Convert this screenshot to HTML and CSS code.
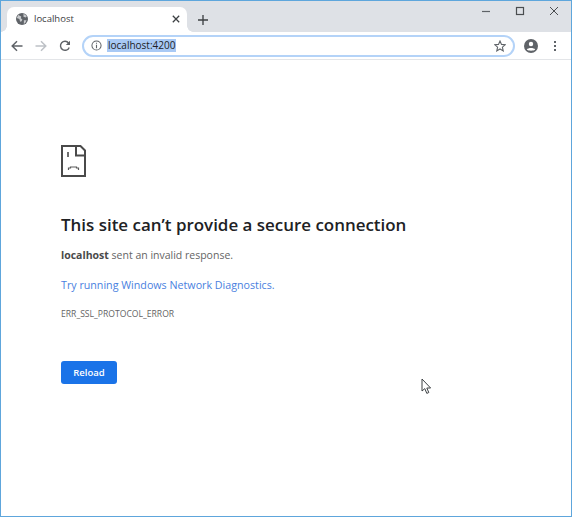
FILE: index.html
```html
<!DOCTYPE html>
<html lang="en">

  <head>
    <meta charset="UTF-8">
    <meta name="viewport" content="width=device-width, initial-scale=1.0">
    <title>localhost</title>
    <link rel="stylesheet" href="styles.css">
  </head>

  <body>
    <div class="window">
      <div class="tabstrip">
        <div class="tab">
          <svg class="globe" viewBox="0 0 16 16" width="12" height="12">
            <circle cx="8" cy="8" r="8" fill="#5f6368"/>
            <path d="M3 2.5 7 4.5 6.5 7 8.5 8.5 7.5 11 5.5 11.5 4.5 8 1 6.5ZM10 1 14.5 4 13 6 10 5ZM10.5 9.5 14 9.5 12.5 13 10.5 14.5Z" fill="#c8cacd"/>
          </svg>
          <span class="tab-title">localhost</span>
          <svg class="tab-close" viewBox="0 0 10 10" width="8" height="8">
            <path d="M1 1 9 9M9 1 1 9" stroke="#3c4043" stroke-width="1.6"/>
          </svg>
        </div>
        <svg class="new-tab" viewBox="0 0 12 12" width="10" height="10">
          <path d="M6 0V12M0 6H12" stroke="#3c4043" stroke-width="1.6"/>
        </svg>
        <div class="caption">
          <svg viewBox="0 0 10 10" width="10" height="10"><path d="M1 5.5H9" stroke="#5f6368" stroke-width="1.2"/></svg>
          <svg viewBox="0 0 10 10" width="10" height="10"><rect x="1.5" y="1.5" width="7" height="7" fill="none" stroke="#4a4d50" stroke-width="1.2"/></svg>
          <svg viewBox="0 0 10 10" width="10" height="10"><path d="M1 1 9 9M9 1 1 9" stroke="#4a4d50" stroke-width="1"/></svg>
        </div>
      </div>

      <div class="toolbar">
        <svg class="nav" viewBox="0 0 12 12" width="12" height="12">
          <path d="M11.5 6H1.5M6 1.2 1.2 6 6 10.8" fill="none" stroke="#5f6368" stroke-width="1.5"/>
        </svg>
        <svg class="nav" viewBox="0 0 12 12" width="12" height="12">
          <path d="M.5 6H10.5M6 1.2 10.8 6 6 10.8" fill="none" stroke="#bdc1c6" stroke-width="1.5"/>
        </svg>
        <svg class="nav" viewBox="0 0 12 12" width="12" height="12">
          <path d="M10.2 7.4A4.5 4.5 0 1 1 9.6 3.1" fill="none" stroke="#5f6368" stroke-width="1.4"/>
          <path d="M11 .8V5H6.8Z" fill="#5f6368"/>
        </svg>
        <div class="omnibox">
          <svg viewBox="0 0 12 12" width="11" height="11">
            <circle cx="6" cy="6" r="5" fill="none" stroke="#5f6368" stroke-width="1.1"/>
            <path d="M6 5.2V9M6 3V4.2" stroke="#5f6368" stroke-width="1.2"/>
          </svg>
          <span class="url">localhost:4200</span>
          <svg class="star" viewBox="0 0 12 12" width="12" height="12">
            <path d="M6 1 7.5 4.4 11.2 4.8 8.4 7.2 9.2 10.9 6 9 2.8 10.9 3.6 7.2.8 4.8 4.5 4.4Z" fill="none" stroke="#5f6368" stroke-width="1.1"/>
          </svg>
        </div>
        <svg class="avatar" viewBox="0 0 14 14" width="14" height="14">
          <circle cx="7" cy="7" r="7" fill="#5f6368"/>
          <circle cx="7" cy="5" r="2.2" fill="#fff"/>
          <path d="M2.8 10.6C4 8.6 10 8.6 11.2 10.6 10 12.2 4 12.2 2.8 10.6Z" fill="#fff"/>
        </svg>
        <div class="menu"><i></i><i></i><i></i></div>
      </div>

      <main class="page">
        <svg class="sad-page" viewBox="0 0 25 32" width="25" height="32">
          <path d="M1 1H19.5L24 5.5V31H1Z" fill="none" stroke="#4a4a4a" stroke-width="2"/>
          <path d="M15 1V10.5H24" fill="none" stroke="#4a4a4a" stroke-width="2"/>
          <path d="M7 7V12" stroke="#6e6e6e" stroke-width="2"/>
          <path d="M7.5 25V23H9.5V22H15.5V23H17.5V25" fill="none" stroke="#5a5a5a" stroke-width="1.2"/>
        </svg>
        <h1>This site can’t provide a secure connection</h1>
        <p class="summary"><strong>localhost</strong> sent an invalid response.</p>
        <a class="diag" href="#">Try running Windows Network Diagnostics.</a>
        <p class="code">ERR_SSL_PROTOCOL_ERROR</p>
        <button class="reload">Reload</button>
        <svg class="cursor" viewBox="0 0 11 17" width="11" height="17">
          <path d="M1 1V13L3.8 10.6 5.8 15.4 7.8 14.5 5.8 10H9.6Z" fill="#fff" stroke="#3c4043" stroke-width="1"/>
        </svg>
      </main>
    </div>
  </body>

</html>
```

FILE: styles.css
```css
* {
  box-sizing: border-box;
}

body {
  margin: 0;
  background-color: #fff;
  font-family: "Open Sans", "Liberation Sans", sans-serif;
}

.window {
  display: flex;
  flex-direction: column;
  width: 572px;
  height: 517px;
  border: 1px solid #5ea6dc;
}

.tabstrip {
  display: flex;
  align-items: flex-end;
  height: 31px;
  padding-left: 6px;
  background-color: #dee1e6;
}

.tab {
  position: relative;
  display: flex;
  align-items: center;
  width: 180px;
  height: 25px;
  padding: 0 2px 2px 9px;
  background-color: #fff;
  border-radius: 7px 7px 0 0;
}

/* little flares where the tab meets the toolbar */
.tab::before,
.tab::after {
  content: "";
  position: absolute;
  bottom: 0;
  width: 6px;
  height: 6px;
}

.tab::before {
  left: -6px;
  background: radial-gradient(circle at 0 0, #dee1e6 5.5px, #fff 6px);
}

.tab::after {
  right: -6px;
  background: radial-gradient(circle at 100% 0, #dee1e6 5.5px, #fff 6px);
}

.tab-title {
  flex: 1;
  margin-left: 6px;
  font-size: 9.5px;
  color: #3c4043;
}

.tab-close {
  margin-right: 5px;
}

.new-tab {
  margin: 0 0 7px 11px;
}

.caption {
  display: flex;
  align-self: flex-start;
  gap: 24px;
  margin: 5px 0 0 auto;
  padding-right: 12px;
}

.toolbar {
  display: flex;
  align-items: center;
  height: 28px;
  padding: 0 12px 0 10px;
  background-color: #fff;
  border-bottom: 1px solid #e3e5e8;
}

.nav {
  margin-right: 12px;
}

.omnibox {
  display: flex;
  align-items: center;
  width: 433px;
  height: 22px;
  margin: 0 9px 0 -1px;
  padding: 0 7px;
  border: 2px solid #b4d3f8;
  border-radius: 11px;
}

.url {
  margin-left: 5px;
  padding: 0 1px;
  font-size: 10px;
  line-height: 13px;
  color: #202124;
  background-color: #a8c9f5;
}

.star {
  margin-left: auto;
}

.menu {
  display: flex;
  flex-direction: column;
  gap: 2px;
  margin-left: 16px;
}

.menu i {
  width: 2px;
  height: 2px;
  background-color: #5f6368;
}

.page {
  position: relative;
  flex: 1;
  padding: 85px 0 0 60px;
  color: #646464;
}

.sad-page {
  display: block;
}

h1 {
  margin: 37px 0 0;
  font-size: 16.95px;
  font-weight: 600;
  line-height: 22px;
  color: #202124;
}

.summary {
  margin: 11px 0 0;
  font-size: 10.5px;
  line-height: 16px;
}

.summary strong {
  color: #4a4a4a;
}

.diag {
  display: block;
  margin-top: 14px;
  font-size: 10.7px;
  line-height: 16px;
  color: #4a7fe0;
  text-decoration: none;
}

.code {
  margin: 15px 0 0;
  font-size: 8.6px;
  line-height: 12px;
}

.reload {
  display: block;
  width: 56px;
  height: 23px;
  margin-top: 41px;
  padding: 0;
  font-family: inherit;
  font-size: 9.5px;
  font-weight: 600;
  color: #fff;
  background-color: #1a73e8;
  border: 0;
  border-radius: 3px;
}

.cursor {
  position: absolute;
  left: 420px;
  top: 318px;
}
```
